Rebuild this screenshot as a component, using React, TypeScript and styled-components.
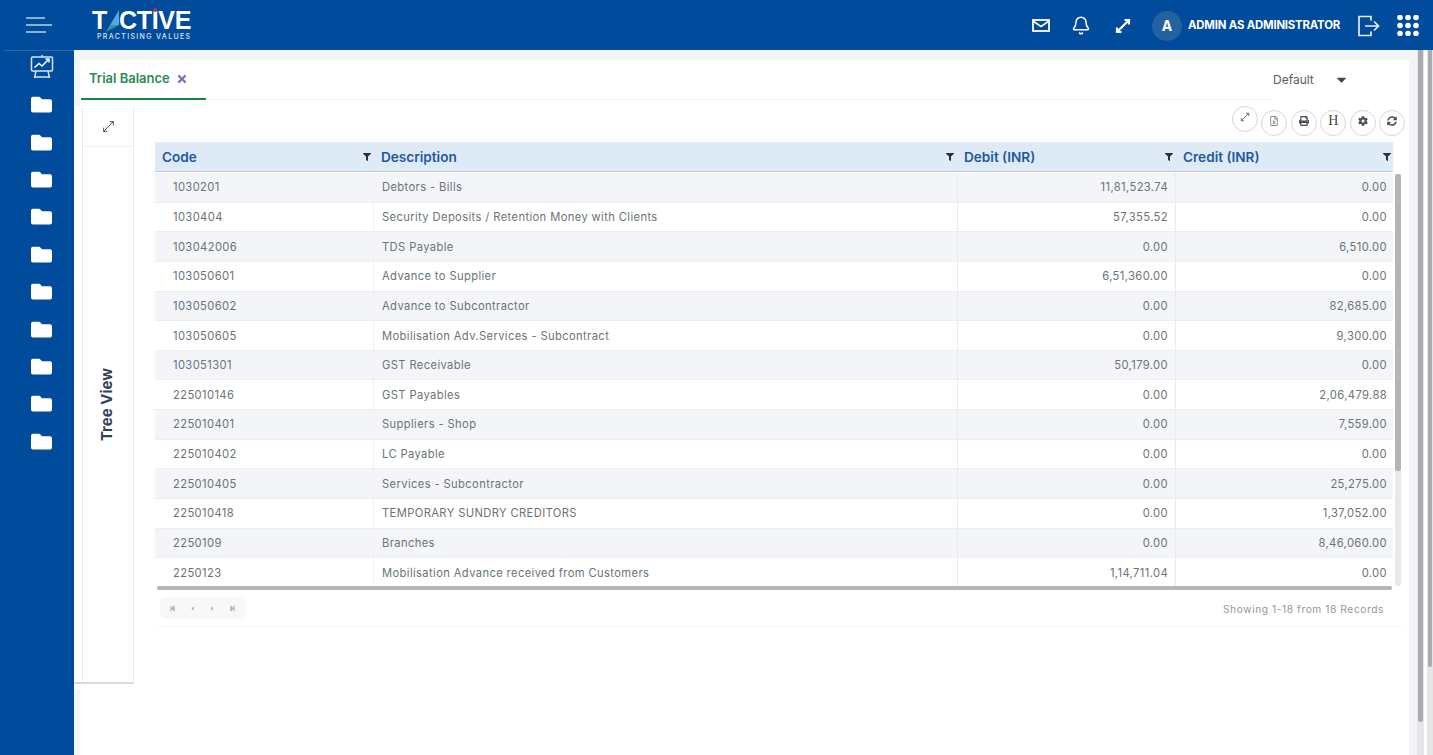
import React from "react";
import styled, { createGlobalStyle } from "styled-components";
import { FaFolder, FaFilter, FaPrint, FaCog, FaSyncAlt, FaTimes, FaCaretDown, FaRegFileExcel, FaStepBackward, FaStepForward, FaCaretLeft, FaCaretRight } from "react-icons/fa";
import { Bell } from "lucide-react";

const Global = createGlobalStyle`
  html, body { margin: 0; padding: 0; height: 100%; overflow: hidden; }
  body { font-family: Inter, "Liberation Sans", sans-serif; background: #fff; }
  * { box-sizing: border-box; }
`;

const Shell = styled.div`
  display: grid;
  grid-template-columns: 74px 1fr;
  width: 1433px;
  height: 755px;
  overflow: hidden;
  background: #004b9b;
`;
const Sidebar = styled.aside`
  display: flex;
  flex-direction: column;
  align-items: stretch;
`;
const BurgerCell = styled.div`
  height: 51px;
  margin-left: 4px;
  border-bottom: 1px solid #2b66a8;
  display: flex;
  align-items: center;
  padding-left: 21px;
`;
const SideIcons = styled.div`
  display: flex;
  flex-direction: column;
  align-items: center;
  padding-top: 1px;
  padding-left: 9px;
`;
const ChartCell = styled.div`
  height: 30px;
  display: flex;
  align-items: center;
  justify-content: center;
  margin-bottom: 4px;
`;
const FolderCell = styled.div`
  height: 37.4px;
  display: flex;
  align-items: center;
  justify-content: center;
  color: #fff;
  font-size: 21px;
`;
const Main = styled.div`
  display: flex;
  flex-direction: column;
  min-width: 0;
`;
const Header = styled.header`
  height: 50px;
  flex: none;
  display: flex;
  align-items: center;
  padding: 0 14px 0 18px;
  color: #fff;
`;
const Logo = styled.div`
  position: relative;
  width: 100px;
  height: 36px;
  margin-top: 2px;
`;
const LogoDot = styled.span`
  position: absolute;
  left: 61px;
  top: 0;
  width: 4px;
  height: 4px;
  border-radius: 50%;
  background: #b5324a;
`;
const LogoWord = styled.div`
  display: flex;
  align-items: center;
  font-family: "Liberation Sans", Arial, sans-serif;
  font-weight: 700;
  font-size: 25px;
  line-height: 25px;
  letter-spacing: -0.3px;
  color: #fff;
`;
const LogoA = styled.span`
  display: inline-block;
  width: 14px;
  height: 25px;
  margin: 0 -1px;
`;
const LogoSub = styled.div`
  font-size: 7px;
  line-height: 8px;
  letter-spacing: 1.35px;
  font-weight: 500;
  color: #dbe6f4;
  padding-left: 5px;
  white-space: nowrap;
`;
const Spacer = styled.div`
  flex: 1;
`;
const HeadActions = styled.div`
  display: flex;
  align-items: center;
  padding-top: 1px;
`;
const HeadIcon = styled.div<{ $w: number; $ml: number }>`
  width: ${(p) => p.$w}px;
  margin-left: ${(p) => p.$ml}px;
  display: flex;
  align-items: center;
  justify-content: center;
`;
const Avatar = styled.div`
  width: 30px;
  height: 30px;
  border-radius: 50%;
  margin-left: 21px;
  margin-right: 0;
  background: #24619f;
  color: #fff;
  display: flex;
  align-items: center;
  justify-content: center;
  font-weight: 700;
  font-size: 14px;
`;
const UserName = styled.div`
  margin-left: 6px;
  margin-top: -2px;
  font-size: 11.4px;
  font-weight: 700;
  letter-spacing: -0.2px;
  white-space: nowrap;
`;
const Body = styled.div`
  flex: 1;
  min-height: 0;
  display: flex;
  background: #f3f4f9;
`;
const Content = styled.div`
  flex: 1;
  min-width: 0;
  display: flex;
  flex-direction: column;
  padding: 10px 0 0 6px;
`;
const Panel = styled.section`
  flex: 1;
  min-height: 0;
  background: #fff;
  display: flex;
  flex-direction: column;
`;
const Tabs = styled.div`
  height: 40px;
  flex: none;
  display: flex;
  align-items: stretch;
`;
const Tab = styled.div`
  width: 125px;
  margin-left: 1px;
  border-bottom: 2.5px solid #14853b;
  display: flex;
  align-items: center;
  padding: 0 0 3px 8px;
  font-size: 13px;
  font-weight: 600;
  color: #2d8a55;
  gap: 6px;
`;
const TabClose = styled.span`
  display: flex;
  color: #7f6fbd;
  font-size: 12px;
  margin-top: 2px;
`;
const TabRest = styled.div`
  flex: 1;
  border-bottom: 1px solid #f2f3f6;
`;
const ViewSelect = styled.div`
  width: 136px;
  padding: 0 0 2px 0;
  display: flex;
  align-items: center;
  font-size: 12px;
  color: #5a6068;
`;
const Caret = styled.span`
  display: flex;
  margin-left: 20px;
  color: #3d4652;
  font-size: 15px;
`;
const Work = styled.div`
  flex: 1;
  min-height: 0;
  display: flex;
  align-items: flex-start;
`;
const TreePane = styled.div`
  width: 60px;
  height: 578px;
  margin-top: 6px;
  margin-left: -6px;
  flex: none;
  display: flex;
  flex-direction: column;
  background: #fff;
  border-right: 1px solid #e9eaee;
  border-bottom: 2px solid #d9dade;
  box-shadow: 0 6px 0 #fff;
`;
const TreeTop = styled.div`
  height: 41px;
  margin-left: 8px;
  border-left: 1px solid #e9eaee;
  border-bottom: 1px solid #eeeff2;
  display: flex;
  align-items: center;
  justify-content: center;
  color: #445;
`;
const TreeLabelWrap = styled.div`
  flex: 1;
  margin-left: 8px;
  border-left: 1px solid #e9eaee;
  display: flex;
  align-items: center;
  justify-content: center;
  padding: 0 3px 20px 0;
`;
const TreeLabel = styled.div`
  writing-mode: vertical-rl;
  transform: rotate(180deg);
  font-size: 15px;
  font-weight: 700;
  color: #2f4258;
`;
const Grid = styled.div`
  flex: 1;
  min-width: 0;
  padding: 6px 4px 0 21px;
`;
const ToolRow = styled.div`
  height: 36px;
  display: flex;
  justify-content: flex-end;
  gap: 3.4px;
  align-items: flex-start;
`;
const ToolBtn = styled.div<{ $drop?: boolean }>`
  width: 26px;
  height: 26px;
  border-radius: 50%;
  border: 1px solid #d6d7da;
  background: #fff;
  margin-top: ${(p) => (p.$drop ? 4 : 0)}px;
  display: flex;
  align-items: center;
  justify-content: center;
  color: #4a4f57;
  font-size: 10px;
  padding-bottom: 5px;
`;
const HLetter = styled.span`
  font-family: "Liberation Serif", serif;
  font-size: 14px;
  font-weight: 400;
  color: #444;
`;
const TableWrap = styled.div`
  width: 1246px;
  position: relative;
`;
const HeadRow = styled.div`
  width: 1238px;
  height: 30px;
  display: grid;
  grid-template-columns: 218px 584px 218px 218px;
  background: #dfeaf7;
  border-bottom: 1.5px solid #c3ccd6;
`;
const HeadCell = styled.div`
  display: flex;
  align-items: center;
  justify-content: space-between;
  padding: 0 2px 0 7px;
  font-size: 13.6px;
  font-weight: 600;
  color: #1e5a9e;
  &:nth-child(2) { padding-left: 8px; padding-right: 3px; }
  &:nth-child(3) { padding-left: 7px; padding-right: 2px; }
  &:nth-child(4) { padding-left: 8px; padding-right: 2px; }
`;
const FilterIcon = styled.span`
  display: flex;
  color: #27323e;
  font-size: 8px;
`;
const Rows = styled.div`
  width: 1238px;
  height: 414px;
  padding-top: 1px;
  overflow: hidden;
`;
const Row = styled.div<{ $odd: boolean }>`
  height: 29.65px;
  display: grid;
  grid-template-columns: 219px 584px 218px 217px;
  background: ${(p) => (p.$odd ? "#f3f5f9" : "#fff")};
  border-bottom: 1px solid #eceef2;
`;
const Cell = styled.div<{ $right?: boolean; $pad: number }>`
  display: flex;
  align-items: center;
  justify-content: ${(p) => (p.$right ? "flex-end" : "flex-start")};
  padding: ${(p) => (p.$right ? `0 ${p.$pad}px 0 0` : `0 0 0 ${p.$pad}px`)};
  font-size: 11.2px;
  letter-spacing: 0.38px;
  color: #6b7377;
  white-space: nowrap;
  border-right: 1px solid #e9ebef;
  &:last-child { border-right: 0; }
  &:first-child { border-right: 1px solid #f0f1f4; }
`;
const VScroll = styled.div`
  position: absolute;
  right: 0;
  top: 32px;
  width: 6px;
  height: 412px;
  background: #e9e9eb;
  border-radius: 2px;
`;
const VThumb = styled.div`
  width: 100%;
  height: 297px;
  background: #b3b5b9;
  border-radius: 2px;
`;
const HScroll = styled.div`
  width: 1235px;
  margin-left: 2px;
  height: 4px;
  background: #b4b6ba;
  border-radius: 2px;
`;
const Foot = styled.div`
  width: 1250px;
  height: 37px;
  display: flex;
  align-items: center;
  justify-content: space-between;
  border-bottom: 1px solid #f7f8f9;
  padding: 0 21px 0 5px;
`;
const Pager = styled.div`
  width: 85px;
  height: 22px;
  border-radius: 5px;
  background: #f8f8fa;
  display: flex;
  align-items: center;
  justify-content: space-around;
  padding: 0 3px;
  color: #b4b6bc;
  font-size: 7px;
`;
const Showing = styled.div`
  font-size: 10.2px;
  letter-spacing: 0.58px;
  color: #94979c;
  margin-top: 1px;
`;
const Scrolls = styled.div`
  width: 24px;
  flex: none;
  padding-left: 8px;
`;
const TrackPair = styled.div`
  height: 100%;
  background: #fff;
  display: flex;
  justify-content: space-between;
`;
const Track = styled.div`
  width: 6.5px;
  height: 100%;
  padding: 0 1px;
  background: #e6e6e8;
`;
const Thumb = styled.div<{ $h: number }>`
  width: 100%;
  height: ${(p) => p.$h}px;
  background: #a9abaf;
  border-radius: 0 0 3px 3px;
`;

const rows = [
  ["1030201", "Debtors - Bills", "11,81,523.74", "0.00"],
  ["1030404", "Security Deposits / Retention Money with Clients", "57,355.52", "0.00"],
  ["103042006", "TDS Payable", "0.00", "6,510.00"],
  ["103050601", "Advance to Supplier", "6,51,360.00", "0.00"],
  ["103050602", "Advance to Subcontractor", "0.00", "82,685.00"],
  ["103050605", "Mobilisation Adv.Services - Subcontract", "0.00", "9,300.00"],
  ["103051301", "GST Receivable", "50,179.00", "0.00"],
  ["225010146", "GST Payables", "0.00", "2,06,479.88"],
  ["225010401", "Suppliers - Shop", "0.00", "7,559.00"],
  ["225010402", "LC Payable", "0.00", "0.00"],
  ["225010405", "Services - Subcontractor", "0.00", "25,275.00"],
  ["225010418", "TEMPORARY SUNDRY CREDITORS", "0.00", "1,37,052.00"],
  ["2250109", "Branches", "0.00", "8,46,060.00"],
  ["2250123", "Mobilisation Advance received from Customers", "1,14,711.04", "0.00"],
];

const Expand = ({ size, color, sw }: { size: number; color: string; sw: number }) => (
  <svg width={size} height={size} viewBox="0 0 16 16" fill="none" stroke={color} strokeWidth={sw}>
    <path d="M9.5 2H14v4.5M14 2L2 14M2 9.5V14h4.5" />
  </svg>
);

const Burger = () => (
  <svg width="28" height="18" viewBox="0 0 28 18" fill="none" stroke="#b9cfe6" strokeWidth="1.6">
    <path d="M1 2h19M1 9h26M1 16h20" />
  </svg>
);

const Chart = () => (
  <svg width="24" height="26" viewBox="0 0 24 26" fill="none" stroke="#d5e4f3" strokeWidth="1.5">
    <rect x="1.5" y="3" width="21" height="14" rx="1" />
    <path d="M12 1v2M6 17l-1.5 7M18 17l1.5 7M5 23h14" />
    <path d="M4.5 13.5l4.5-4 3 2.5 6-6" stroke="#fff" />
    <path d="M15.5 5h3.5v3.5" stroke="#fff" />
  </svg>
);

const Mail = () => (
  <svg width="18" height="13" viewBox="0 0 18 13" fill="none" stroke="#fff">
    <rect x="1" y="1" width="16" height="11" strokeWidth="1.8" />
    <path d="M1 2l8 5.5L17 2" strokeWidth="1.6" />
  </svg>
);

const Logout = () => (
  <svg width="23" height="22" viewBox="0 0 23 22" fill="none" stroke="#e6eef8" strokeWidth="1.7">
    <path d="M14 5.5V1.5H2v19h12v-4" />
    <path d="M8 11h13M17 6.5l4.5 4.5-4.5 4.5" />
  </svg>
);

const Dots = () => (
  <svg width="22" height="21" viewBox="0 0 22 21" fill="#fff">
    {[3, 11, 19].flatMap((y) =>
      [3, 11, 19].map((x) => <circle key={`${x}-${y}`} cx={x} cy={y - 0.5} r="2.8" />)
    )}
  </svg>
);

const LogoTick = () => (
  <svg width="14" height="25" viewBox="0 0 14 25">
    <path d="M0 24L13 2v15L6 17z" fill="#5aa6d8" />
    <path d="M0 24l6-7h7z" fill="#2f9c8c" />
  </svg>
);

export default function App() {
  return (
    <Shell>
      <Global />
      <Sidebar>
        <BurgerCell>
          <Burger />
        </BurgerCell>
        <SideIcons>
          <ChartCell>
            <Chart />
          </ChartCell>
          {Array.from({ length: 10 }).map((_, i) => (
            <FolderCell key={i}>
              <FaFolder />
            </FolderCell>
          ))}
        </SideIcons>
      </Sidebar>
      <Main>
        <Header>
          <Logo>
            <LogoDot />
            <LogoWord>
              T
              <LogoA>
                <LogoTick />
              </LogoA>
              CTIVE
            </LogoWord>
            <LogoSub>PRACTISING VALUES</LogoSub>
          </Logo>
          <Spacer />
          <HeadActions>
            <HeadIcon $w={18} $ml={0}>
              <Mail />
            </HeadIcon>
            <HeadIcon $w={20} $ml={21}>
              <Bell size={23} color="#fff" strokeWidth={1.8} />
            </HeadIcon>
            <HeadIcon $w={16} $ml={24}>
              <Expand size={16} color="#fff" sw={2.2} />
            </HeadIcon>
            <Avatar>A</Avatar>
            <UserName>ADMIN AS ADMINISTRATOR</UserName>
            <HeadIcon $w={23} $ml={17}>
              <Logout />
            </HeadIcon>
            <HeadIcon $w={22} $ml={17}>
              <Dots />
            </HeadIcon>
          </HeadActions>
        </Header>
        <Body>
          <Content>
            <Panel>
              <Tabs>
                <Tab>
                  Trial Balance
                  <TabClose>
                    <FaTimes />
                  </TabClose>
                </Tab>
                <TabRest />
                <ViewSelect>
                  Default
                  <Caret>
                    <FaCaretDown />
                  </Caret>
                </ViewSelect>
              </Tabs>
              <Work>
                <TreePane>
                  <TreeTop>
                    <Expand size={13} color="#4a5058" sw={1.2} />
                  </TreeTop>
                  <TreeLabelWrap>
                    <TreeLabel>Tree View</TreeLabel>
                  </TreeLabelWrap>
                </TreePane>
                <Grid>
                  <ToolRow>
                    <ToolBtn>
                      <Expand size={10} color="#555" sw={1.3} />
                    </ToolBtn>
                    <ToolBtn $drop>
                      <FaRegFileExcel color="#8a8d92" />
                    </ToolBtn>
                    <ToolBtn $drop>
                      <FaPrint />
                    </ToolBtn>
                    <ToolBtn $drop>
                      <HLetter>H</HLetter>
                    </ToolBtn>
                    <ToolBtn $drop>
                      <FaCog />
                    </ToolBtn>
                    <ToolBtn $drop>
                      <FaSyncAlt />
                    </ToolBtn>
                  </ToolRow>
                  <TableWrap>
                    <HeadRow>
                      {["Code", "Description", "Debit (INR)", "Credit (INR)"].map((h) => (
                        <HeadCell key={h}>
                          {h}
                          <FilterIcon>
                            <FaFilter />
                          </FilterIcon>
                        </HeadCell>
                      ))}
                    </HeadRow>
                    <Rows>
                      {rows.map((r, i) => (
                        <Row key={r[0]} $odd={i % 2 === 0}>
                          <Cell $pad={18}>{r[0]}</Cell>
                          <Cell $pad={8}>{r[1]}</Cell>
                          <Cell $right $pad={7}>{r[2]}</Cell>
                          <Cell $right $pad={6}>{r[3]}</Cell>
                        </Row>
                      ))}
                    </Rows>
                    <VScroll>
                      <VThumb />
                    </VScroll>
                    <HScroll />
                    <Foot>
                      <Pager>
                        <FaStepBackward />
                        <FaCaretLeft />
                        <FaCaretRight />
                        <FaStepForward />
                      </Pager>
                      <Showing>Showing 1-18 from 18 Records</Showing>
                    </Foot>
                  </TableWrap>
                </Grid>
              </Work>
            </Panel>
          </Content>
          <Scrolls>
            <TrackPair>
              <Track>
                <Thumb $h={672} />
              </Track>
              <Track>
                <Thumb $h={617} />
              </Track>
            </TrackPair>
          </Scrolls>
        </Body>
      </Main>
    </Shell>
  );
}
